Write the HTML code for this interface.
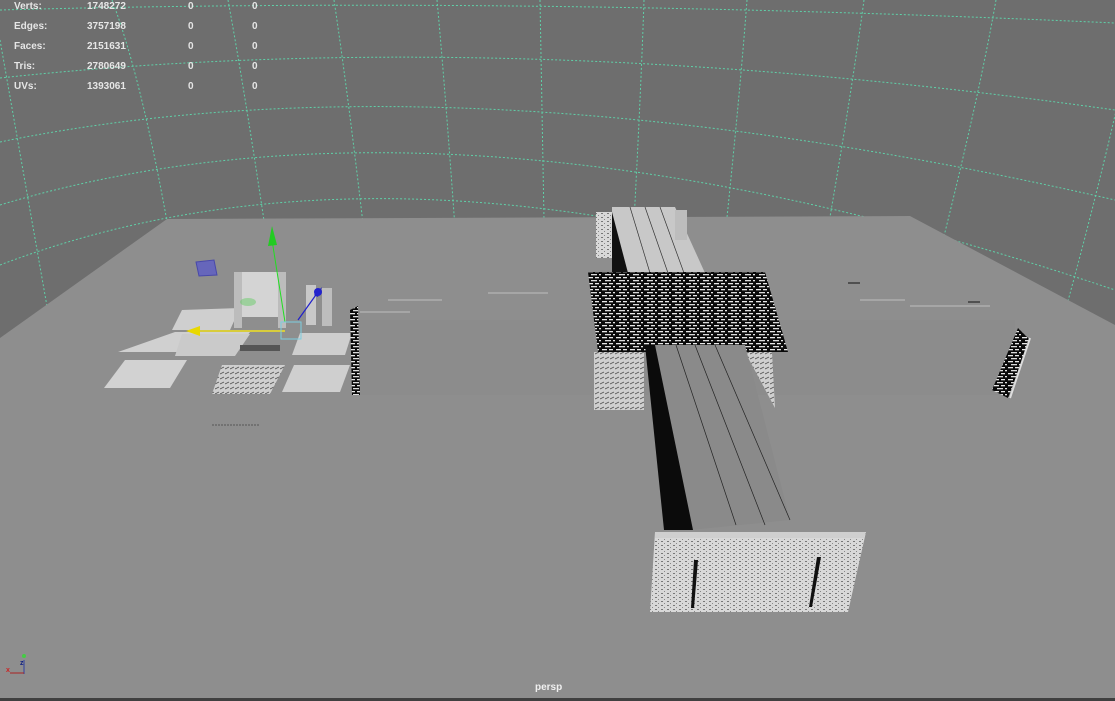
<!DOCTYPE html>
<html><head><meta charset="utf-8"><style>
html,body{margin:0;padding:0;background:#6e6e6e;}
#v{position:relative;width:1115px;height:701px;overflow:hidden;font-family:"Liberation Sans",sans-serif;}
.st{position:absolute;color:#e6e6e6;font-size:10px;font-weight:bold;line-height:10px;}
</style></head><body><div id="v">
<svg width="1115" height="701" viewBox="0 0 1115 701" style="position:absolute;left:0;top:0">
<defs>
<pattern id="blk" width="14" height="6" patternUnits="userSpaceOnUse">
<rect width="14" height="6" fill="#0a0a0a"/>
<rect x="0" y="1" width="5" height="1.3" fill="#e8e8e8"/>
<rect x="7" y="1" width="4" height="1.3" fill="#e8e8e8"/>
<rect x="3" y="4" width="6" height="1.3" fill="#dcdcdc"/>
<rect x="11" y="4" width="2" height="1.3" fill="#e8e8e8"/>
</pattern>
<pattern id="lt" width="6" height="4" patternUnits="userSpaceOnUse">
<rect width="6" height="4" fill="#d8d8d8"/>
<rect x="1" y="1" width="2" height="1" fill="#777"/>
<rect x="4" y="3" width="1" height="1" fill="#888"/>
</pattern>
<pattern id="hatch" width="5" height="5" patternUnits="userSpaceOnUse">
<rect width="5" height="5" fill="#cfcfcf"/>
<path d="M0 4 L4 2" stroke="#555" stroke-width="0.8"/>
</pattern>
</defs>
<rect width="1115" height="701" fill="#6e6e6e"/>
<g fill="none" stroke="#5fd0a8" stroke-width="1" stroke-dasharray="2,2">
<path d="M0 10 Q520 -4 1115 23"/>
<path d="M0 78 Q500 24 1115 110"/>
<path d="M0 142 Q455 49 1115 200"/>
<path d="M0 205 Q455 68 1115 290"/>
<path d="M0 265 Q455 92 1115 370"/>
<path d="M0 40 L60 380"/>
<path d="M112 0 Q150 100 185 330"/>
<path d="M228 0 Q250 120 280 330"/>
<path d="M334 0 Q352 120 375 330"/>
<path d="M437 0 Q448 120 462 330"/>
<path d="M540 0 L546 330"/>
<path d="M644 0 Q640 120 628 330"/>
<path d="M747 0 Q738 120 715 330"/>
<path d="M864 0 Q848 120 810 330"/>
<path d="M996 0 Q975 120 920 330"/>
<path d="M1140 0 Q1110 150 1060 330"/>
</g>
<polygon points="0,338 167,219 910,216 1115,325 1115,700 0,700" fill="#8e8e8e"/>
<rect x="355" y="320" width="660" height="75" fill="#8c8c8c"/>
<rect x="0" y="698" width="1115" height="3" fill="#404040"/>
<g stroke="#bdbdbd" stroke-width="1">
<line x1="388" y1="300" x2="442" y2="300"/><line x1="488" y1="293" x2="548" y2="293"/>
<line x1="860" y1="300" x2="905" y2="300"/><line x1="910" y1="306" x2="990" y2="306"/>
<line x1="360" y1="312" x2="410" y2="312"/>
</g>
<line x1="848" y1="283" x2="860" y2="283" stroke="#111"/>
<line x1="968" y1="302" x2="980" y2="302" stroke="#111"/>
<rect x="596" y="212" width="16" height="46" fill="url(#lt)"/>
<polygon points="612,207 675,207 705,273 612,273" fill="#c8c8c8"/>
<polygon points="612,212 628,273 612,273" fill="#111"/>
<rect x="675" y="210" width="12" height="30" fill="#bdbdbd"/>
<g stroke="#333" stroke-width="0.7"><line x1="630" y1="207" x2="650" y2="273"/><line x1="645" y1="207" x2="668" y2="273"/><line x1="660" y1="207" x2="684" y2="273"/></g>
<polygon points="588,272 765,272 788,352 598,352" fill="url(#blk)"/>
<rect x="594" y="352" width="50" height="58" fill="url(#hatch)"/>
<polygon points="745,352 772,352 775,408" fill="url(#hatch)"/>
<polygon points="648,345 745,345 790,520 690,530" fill="#8a8a8a"/>
<polygon points="645,345 655,345 693,530 664,530" fill="#0b0b0b"/>
<g stroke="#222" stroke-width="0.7"><line x1="676" y1="345" x2="736" y2="525"/><line x1="695" y1="345" x2="765" y2="525"/><line x1="715" y1="345" x2="790" y2="520"/></g>
<polygon points="655,532 866,532 848,612 650,612" fill="url(#lt)"/>
<polygon points="655,532 866,532 864,538 655,538" fill="#cfcfcf"/>
<polygon points="694,560 698,560 694,608 691,608" fill="#111"/>
<polygon points="817,557 821,557 812,607 809,607" fill="#111"/>
<polygon points="1018,328 1030,340 1008,398 992,390" fill="url(#blk)"/>
<line x1="1030" y1="338" x2="1010" y2="398" stroke="#ddd" stroke-width="2"/>
<polygon points="118,352 175,332 250,332 235,352" fill="#d0d0d0"/>
<polygon points="182,310 240,308 230,330 172,330" fill="#cfcfcf"/>
<polygon points="182,334 250,334 235,356 175,356" fill="#cacaca"/>
<polygon points="104,388 125,360 187,360 170,388" fill="#d2d2d2"/>
<polygon points="222,365 285,365 270,394 212,394" fill="url(#hatch)"/>
<polygon points="294,365 350,365 340,392 282,392" fill="#cfcfcf"/>
<polygon points="300,333 352,333 345,355 292,355" fill="#cecece"/>
<rect x="238" y="272" width="46" height="45" fill="#d4d4d4"/>
<rect x="234" y="272" width="8" height="56" fill="#bcbcbc"/>
<rect x="278" y="272" width="8" height="56" fill="#bcbcbc"/>
<rect x="306" y="285" width="10" height="40" fill="#c8c8c8"/>
<rect x="322" y="288" width="10" height="38" fill="#bdbdbd"/>
<polygon points="350,310 358,306 360,395 352,395" fill="url(#blk)"/>
<polygon points="196,262 214,260 217,275 199,276" fill="#6666bb" stroke="#4848aa"/>
<rect x="240" y="345" width="40" height="6" fill="#555"/>
<line x1="212" y1="425" x2="260" y2="425" stroke="#555" stroke-dasharray="2,1"/>
<line x1="272" y1="240" x2="285" y2="322" stroke="#22dd22" stroke-width="1"/>
<polygon points="272,226 268,246 277,245" fill="#22cc22"/>
<line x1="190" y1="331" x2="285" y2="331" stroke="#f0e020" stroke-width="1.5"/>
<polygon points="186,331 200,326 200,336" fill="#e8d800"/>
<line x1="298" y1="320" x2="318" y2="292" stroke="#2020cc" stroke-width="1.2"/>
<polygon points="322,287 314,295 318,297" fill="#1a1acc"/>
<circle cx="318" cy="292" r="4" fill="#2222cc"/>
<rect x="281" y="322" width="20" height="17" fill="none" stroke="#7ccde0" stroke-width="1"/>
<ellipse cx="248" cy="302" rx="8" ry="4" fill="#66cc66" opacity="0.5"/>
<line x1="24" y1="660" x2="24" y2="674" stroke="#3040a0"/>
<line x1="10" y1="673" x2="24" y2="673" stroke="#aa2222"/>
<circle cx="24" cy="656" r="2" fill="#44cc44"/>
<text x="20" y="665" font-size="7" font-weight="bold" fill="#102080" font-family="Liberation Sans">z</text>
<text x="6" y="672" font-size="7" font-weight="bold" fill="#cc2222" font-family="Liberation Sans">x</text>
<text x="535" y="690" font-size="10" font-weight="bold" fill="#f0f0f0" font-family="Liberation Sans">persp</text>
</svg>
<div class="st" style="left:14px;top:2px">Verts:</div><div class="st" style="left:87px;top:2px">1748272</div><div class="st" style="left:188px;top:2px">0</div><div class="st" style="left:252px;top:2px">0</div>
<div class="st" style="left:14px;top:22px">Edges:</div><div class="st" style="left:87px;top:22px">3757198</div><div class="st" style="left:188px;top:22px">0</div><div class="st" style="left:252px;top:22px">0</div>
<div class="st" style="left:14px;top:42px">Faces:</div><div class="st" style="left:87px;top:42px">2151631</div><div class="st" style="left:188px;top:42px">0</div><div class="st" style="left:252px;top:42px">0</div>
<div class="st" style="left:14px;top:62px">Tris:</div><div class="st" style="left:87px;top:62px">2780649</div><div class="st" style="left:188px;top:62px">0</div><div class="st" style="left:252px;top:62px">0</div>
<div class="st" style="left:14px;top:82px">UVs:</div><div class="st" style="left:87px;top:82px">1393061</div><div class="st" style="left:188px;top:82px">0</div><div class="st" style="left:252px;top:82px">0</div>
</div></body></html>
